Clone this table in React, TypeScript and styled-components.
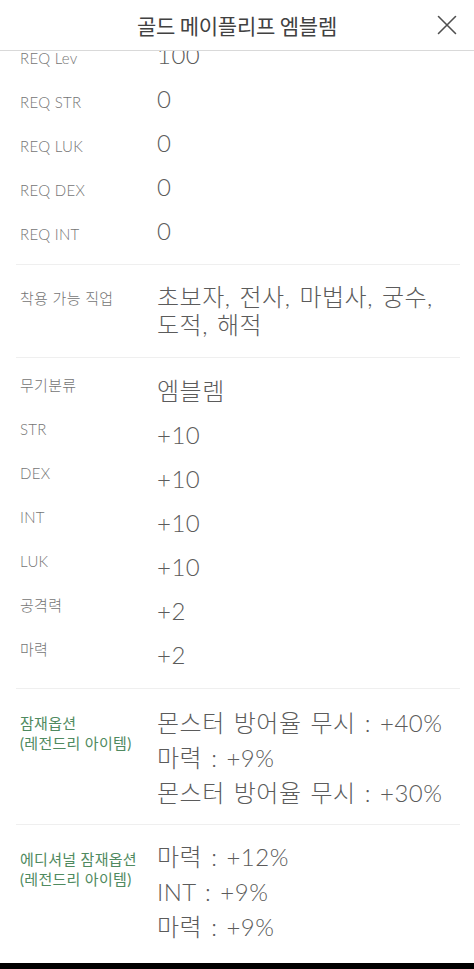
import React from "react";
import styled, { createGlobalStyle } from "styled-components";

const GlobalStyle = createGlobalStyle`
  html, body {
    margin: 0;
    padding: 0;
    background: #ffffff;
  }
  body {
    font-family: Lato, "Noto Sans CJK KR", sans-serif;
    -webkit-font-smoothing: antialiased;
  }
`;

const Screen = styled.div`
  height: 969px;
  display: flex;
  flex-direction: column;
  overflow: hidden;
  background: #ffffff;
`;

const Header = styled.header`
  flex: none;
  height: 50px;
  border-bottom: 1px solid #d9d9d9;
  display: grid;
  grid-template-columns: 1fr auto 1fr;
  align-items: center;
  position: relative;
  z-index: 1;
  background: #ffffff;
`;

const Title = styled.h1`
  grid-column: 2;
  margin: 0;
  font-family: "Noto Sans CJK KR", sans-serif;
  font-size: 21px;
  font-weight: 400;
  line-height: 1;
  color: #414141;
  letter-spacing: -0.2px;
`;

const CloseButton = styled.button`
  grid-column: 3;
  justify-self: end;
  margin-right: 15px;
  width: 24px;
  height: 24px;
  padding: 0;
  border: 0;
  background: none;
  color: #505050;
  display: flex;
  align-items: center;
  justify-content: center;
`;

const Viewport = styled.main`
  flex: 1;
  min-height: 0;
  overflow: hidden;
`;

const Content = styled.div`
  margin-top: -11px;
  padding: 0 14px 0 16px;
`;

const Section = styled.section<{ $pt: number; $pb: number; $first?: boolean }>`
  padding: ${(p) => p.$pt}px 0 ${(p) => p.$pb}px;
  border-top: ${(p) => (p.$first ? "none" : "1px solid #efefef")};
`;

const Row = styled.div<{ $h?: number }>`
  display: grid;
  grid-template-columns: 141px 1fr;
  align-items: start;
  min-height: ${(p) => (p.$h ? `${p.$h}px` : "0")};
`;

const Label = styled.div<{ $pt: number; $lh?: number; $green?: boolean }>`
  padding: ${(p) => p.$pt}px 0 0 4px;
  font-size: 15px;
  font-weight: ${(p) => (p.$green ? 400 : 300)};
  letter-spacing: 0.3px;
  line-height: ${(p) => p.$lh ?? 18}px;
  color: ${(p) => (p.$green ? "#4f8a60" : "#757575")};
  white-space: nowrap;
`;

const Value = styled.div<{ $lh: number }>`
  font-size: 24px;
  font-weight: 300;
  letter-spacing: 0.5px;
  word-spacing: 2px;
  line-height: ${(p) => p.$lh}px;
  color: #5b5b5b;
  word-break: keep-all;
`;

const ValueLine = styled.div``;

const XIcon = () => (
  <svg width="20" height="20" viewBox="0 0 20 20" fill="none" aria-hidden="true">
    <path d="M1.5 1.5 L18.5 18.5 M18.5 1.5 L1.5 18.5" stroke="currentColor" strokeWidth="1.6" strokeLinecap="round" />
  </svg>
);

const reqRows: [string, string][] = [
  ["REQ Lev", "100"],
  ["REQ STR", "0"],
  ["REQ LUK", "0"],
  ["REQ DEX", "0"],
  ["REQ INT", "0"],
];

const statRows: [string, string][] = [
  ["무기분류", "엠블렘"],
  ["STR", "+10"],
  ["DEX", "+10"],
  ["INT", "+10"],
  ["LUK", "+10"],
  ["공격력", "+2"],
  ["마력", "+2"],
];

const potential = ["몬스터 방어율 무시 : +40%", "마력 : +9%", "몬스터 방어율 무시 : +30%"];
const additional = ["마력 : +12%", "INT : +9%", "마력 : +9%"];

const BottomBar = styled.div`
  flex: none;
  height: 6px;
  background: #000000;
`;

export default function App() {
  return (
    <>
      <GlobalStyle />
      <Screen>
        <Header>
          <Title>골드 메이플리프 엠블렘</Title>
          <CloseButton aria-label="닫기">
            <XIcon />
          </CloseButton>
        </Header>
        <Viewport>
          <Content>
            <Section $first $pt={0} $pb={4}>
              {reqRows.map(([k, v]) => (
                <Row key={k} $h={44}>
                  <Label $pt={9}>{k}</Label>
                  <Value $lh={30}>{v}</Value>
                </Row>
              ))}
            </Section>
            <Section $pt={18} $pb={18}>
              <Row>
                <Label $pt={6}>착용 가능 직업</Label>
                <Value $lh={28}>초보자, 전사, 마법사, 궁수, 도적, 해적</Value>
              </Row>
            </Section>
            <Section $pt={18} $pb={4}>
              {statRows.map(([k, v]) => (
                <Row key={k} $h={44}>
                  <Label $pt={0}>{k}</Label>
                  <Value $lh={30}>{v}</Value>
                </Row>
              ))}
            </Section>
            <Section $pt={16} $pb={14}>
              <Row>
                <Label $pt={8} $lh={20} $green>
                  잠재옵션
                  <br />
                  (레전드리 아이템)
                </Label>
                <Value $lh={35}>
                  {potential.map((l, i) => (
                    <ValueLine key={i}>{l}</ValueLine>
                  ))}
                </Value>
              </Row>
            </Section>
            <Section $pt={14} $pb={14}>
              <Row>
                <Label $pt={10} $lh={20} $green>
                  에디셔널 잠재옵션
                  <br />
                  (레전드리 아이템)
                </Label>
                <Value $lh={35}>
                  {additional.map((l, i) => (
                    <ValueLine key={i}>{l}</ValueLine>
                  ))}
                </Value>
              </Row>
            </Section>
          </Content>
        </Viewport>
        <BottomBar />
      </Screen>
    </>
  );
}
